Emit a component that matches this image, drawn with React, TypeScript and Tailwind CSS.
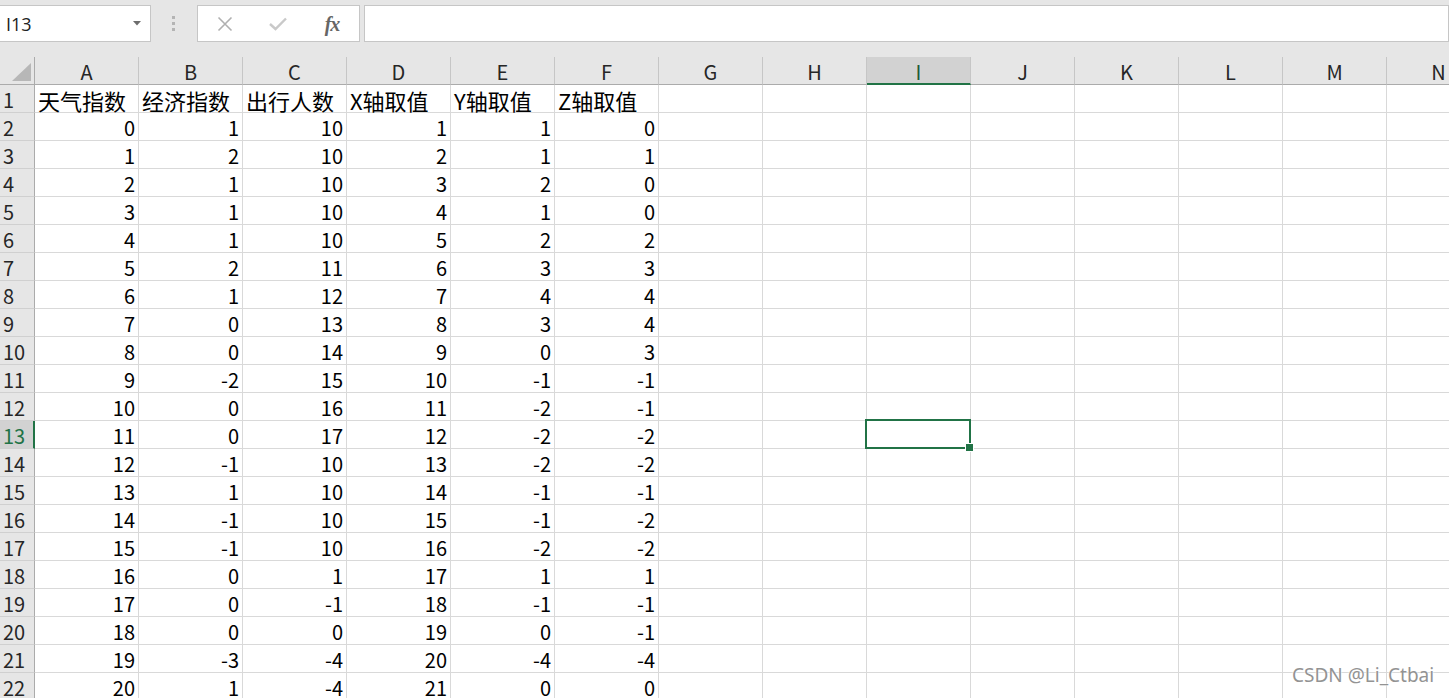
import React from "react";

const COLS = ["A", "B", "C", "D", "E", "F", "G", "H", "I", "J", "K", "L", "M", "N"];
const HEAD = ["天气指数", "经济指数", "出行人数", "X轴取值", "Y轴取值", "Z轴取值"];
const B = [1, 2, 1, 1, 1, 2, 1, 0, 0, -2, 0, 0, -1, 1, -1, -1, 0, 0, 0, -3, 1];
const C = [10, 10, 10, 10, 10, 11, 12, 13, 14, 15, 16, 17, 10, 10, 10, 10, 1, -1, 0, -4, -4];
const E = [1, 1, 2, 1, 2, 3, 4, 3, 0, -1, -2, -2, -2, -1, -1, -2, 1, -1, 0, -4, 0];
const F = [0, 1, 0, 0, 2, 3, 4, 4, 3, -1, -1, -2, -2, -1, -2, -2, 1, -1, -1, -4, 0];

const FONT = "font-['Noto_Sans_CJK_SC','Noto_Sans',sans-serif]";

function Cell({ children, align, selected }: { children?: React.ReactNode; align?: "left" | "right"; selected?: boolean }) {
  return (
    <div
      className={`relative shrink-0 w-[104px] h-[28px] border-r border-b border-[#d9d9d9] flex items-center whitespace-nowrap leading-none ${
        align === "right" ? "justify-end pr-[3px] text-[20px]" : "justify-start pl-[3px] text-[22px]"
      }`}
    >
      <span className="pt-[3px]">{children}</span>
      {selected && (
        <div className="absolute -left-[2px] -top-[2px] -right-[1px] -bottom-[1px] border-2 border-[#217346] z-10">
          <div className="absolute -right-[5px] -bottom-[5px] w-[9px] h-[9px] bg-[#217346] border-[1.5px] border-white" />
        </div>
      )}
    </div>
  );
}

export default function App() {
  const rows: (string | number)[][] = [];
  rows.push(HEAD);
  for (let i = 0; i < 21; i++) rows.push([i, B[i], C[i], i + 1, E[i], F[i]]);

  return (
    <div className={`relative w-[1449px] h-[698px] overflow-hidden bg-white text-black ${FONT}`}>
      {/* Formula bar */}
      <div className="h-[57px] bg-[#e6e6e6] flex items-start pt-[5px]">
        <div className="w-[151px] h-[37px] shrink-0 bg-white border border-l-0 border-[#c6c6c6] flex items-center justify-between pl-[6px] pr-[9px]">
          <span className="font-['Open_Sans',sans-serif] text-[18px] text-[#222] leading-none">I13</span>
          <svg width="8" height="5" viewBox="0 0 8 5">
            <path d="M0 0 L8 0 L4 4.5 Z" fill="#6d6d6d" />
          </svg>
        </div>
        <div className="w-[46px] shrink-0 h-[37px] flex flex-col items-center justify-center gap-[3px] pr-[1px]">
          <div className="w-[3px] h-[3px] bg-[#b4b4b4]" />
          <div className="w-[3px] h-[3px] bg-[#b4b4b4]" />
          <div className="w-[3px] h-[3px] bg-[#b4b4b4]" />
        </div>
        <div className="w-[163px] h-[37px] shrink-0 bg-white border border-[#c6c6c6] flex items-center">
          <div className="w-[52px] flex justify-center pl-[1px]">
            <svg width="16" height="16" viewBox="0 0 16 16">
              <path d="M1.5 1.5 L14.5 14.5 M14.5 1.5 L1.5 14.5" stroke="#b0b0b0" strokeWidth="1.6" />
            </svg>
          </div>
          <div className="w-[56px] flex justify-center">
            <svg width="18" height="14" viewBox="0 0 18 14">
              <path d="M1 7 L6.5 12 L17 1.5" stroke="#c9c9c9" strokeWidth="2.4" fill="none" />
            </svg>
          </div>
          <div className="w-[52px] flex justify-center">
            <span className="font-['Liberation_Serif',serif] italic font-bold text-[20px] text-[#666] leading-none tracking-[-1px]">fx</span>
          </div>
        </div>
        <div className="ml-[4px] flex-1 h-[37px] bg-white border border-[#c6c6c6]" />
      </div>

      {/* Column header */}
      <div className="flex h-[28px] bg-[#e6e6e6]">
        <div className="shrink-0 w-[35px] h-[28px] border-r border-b border-[#ababab] flex items-end justify-end pr-[3px] pb-[3px]">
          <svg width="19" height="18" viewBox="0 0 19 18">
            <path d="M19 0 L19 18 L0 18 Z" fill="#b7b7b7" />
          </svg>
        </div>
        {COLS.map((c) => (
          <div
            key={c}
            className={`shrink-0 w-[104px] h-[28px] border-r border-r-[#c6c6c6] flex items-center justify-center text-[20px] leading-none ${
              c === "I"
                ? "bg-[#d2d2d2] border-b-2 border-b-[#217346] text-[#1f5c39]"
                : "border-b border-b-[#ababab] text-[#262626]"
            }`}
          >
            <span className="pt-[3px]">{c}</span>
          </div>
        ))}
      </div>

      {/* Rows */}
      {Array.from({ length: 22 }).map((_, r) => {
        const data = rows[r];
        const rowNum = r + 1;
        const sel = rowNum === 13;
        return (
          <div key={r} className="flex h-[28px]">
            <div
              className={`shrink-0 w-[35px] h-[28px] border-b border-b-[#d0d0d0] flex items-center pl-[3px] text-[20px] leading-none ${
                sel
                  ? "bg-[#d2d2d2] border-r-2 border-r-[#217346] text-[#217346]"
                  : "bg-[#e6e6e6] border-r border-r-[#ababab] text-[#262626]"
              }`}
            >
              <span className="pt-[3px]">{rowNum}</span>
            </div>
            {COLS.map((c, ci) => {
              const v = ci < 6 ? data[ci] : undefined;
              return (
                <Cell key={c} align={r === 0 ? "left" : "right"} selected={sel && c === "I"}>
                  {v}
                </Cell>
              );
            })}
          </div>
        );
      })}

      {/* Watermark */}
      <div className="absolute left-[1292px] top-[666px] font-['Noto_Sans',sans-serif] text-[19px] leading-none text-[#939393] [text-shadow:0_0_2px_#fff,0_0_2px_#fff]">
        CSDN @Li_Ctbai
      </div>
    </div>
  );
}
